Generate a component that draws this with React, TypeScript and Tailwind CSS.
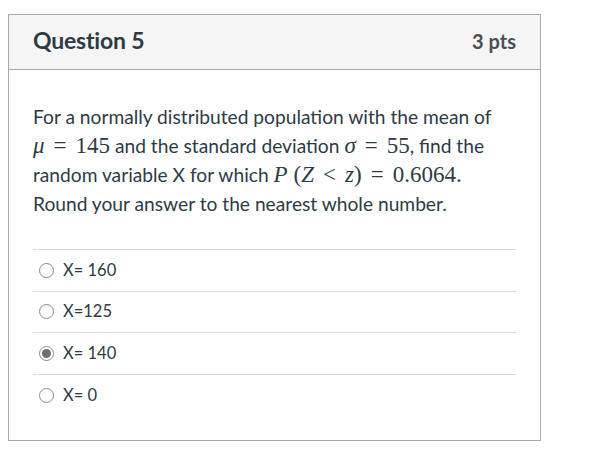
import React from 'react'

const options = [
  { label: 'X= 160', checked: false },
  { label: 'X=125', checked: false },
  { label: 'X= 140', checked: true },
  { label: 'X= 0', checked: false },
]

function Radio({ checked }: { checked: boolean }) {
  return (
    <span className="w-[15px] h-[15px] rounded-full border border-[#8a8a8a] bg-white flex items-center justify-center shrink-0">
      {checked && <span className="w-[9px] h-[9px] rounded-full bg-[#707070]" />}
    </span>
  )
}

function M({ children }: { children: React.ReactNode }) {
  return <span className="font-['Liberation_Serif',serif] text-[23px] leading-none">{children}</span>
}

function Rel({ children }: { children: React.ReactNode }) {
  return <span className="mx-[9px]">{children}</span>
}

export default function App() {
  return (
    <div className="w-[602px] h-[450px] bg-white pt-[14px] pl-[8px] font-['Lato',sans-serif] text-[#2d3b45]">
      <div className="w-[533px] border border-[#a9a9a9]">
        {/* Header */}
        <div className="h-[55px] bg-[#f5f5f5] border-b border-[#a9a9a9] flex items-center justify-between px-6 pb-[3px]">
          <h2 className="text-[23px] font-bold text-[#2d3b45] tracking-[-0.2px]">Question 5</h2>
          <span className="text-[20px] font-bold text-[#4a4f54]">3 pts</span>
        </div>

        {/* Body */}
        <div className="px-6 pt-[32px] pb-[24px]">
          <p className="text-[19.2px] leading-[29px] whitespace-nowrap">
            For a normally distributed population with the mean of
            <br />
            <M>
              <i>μ</i>
              <Rel>=</Rel>145
            </M>{' '}
            and the standard deviation{' '}
            <M>
              <i>σ</i>
              <Rel>=</Rel>55
            </M>
            , find the
            <br />
            random variable X for which{' '}
            <M>
              <i>P</i>
              <span className="ml-[6px]">(</span>
              <i>Z</i>
              <Rel>&lt;</Rel>
              <i>z</i>)<Rel>=</Rel>0.6064.
            </M>
            <br />
            Round your answer to the nearest whole number.
          </p>

          <div className="mt-[31px] border-t border-[#dcdcdc]">
            {options.map((o, i) => (
              <div
                key={o.label}
                className={`h-[41.5px] flex items-center gap-[9px] pl-[6px] ${i < options.length - 1 ? 'border-b border-[#dcdcdc]' : ''}`}
              >
                <Radio checked={o.checked} />
                <span className="text-[16.5px]">{o.label}</span>
              </div>
            ))}
          </div>
        </div>
      </div>
    </div>
  )
}
